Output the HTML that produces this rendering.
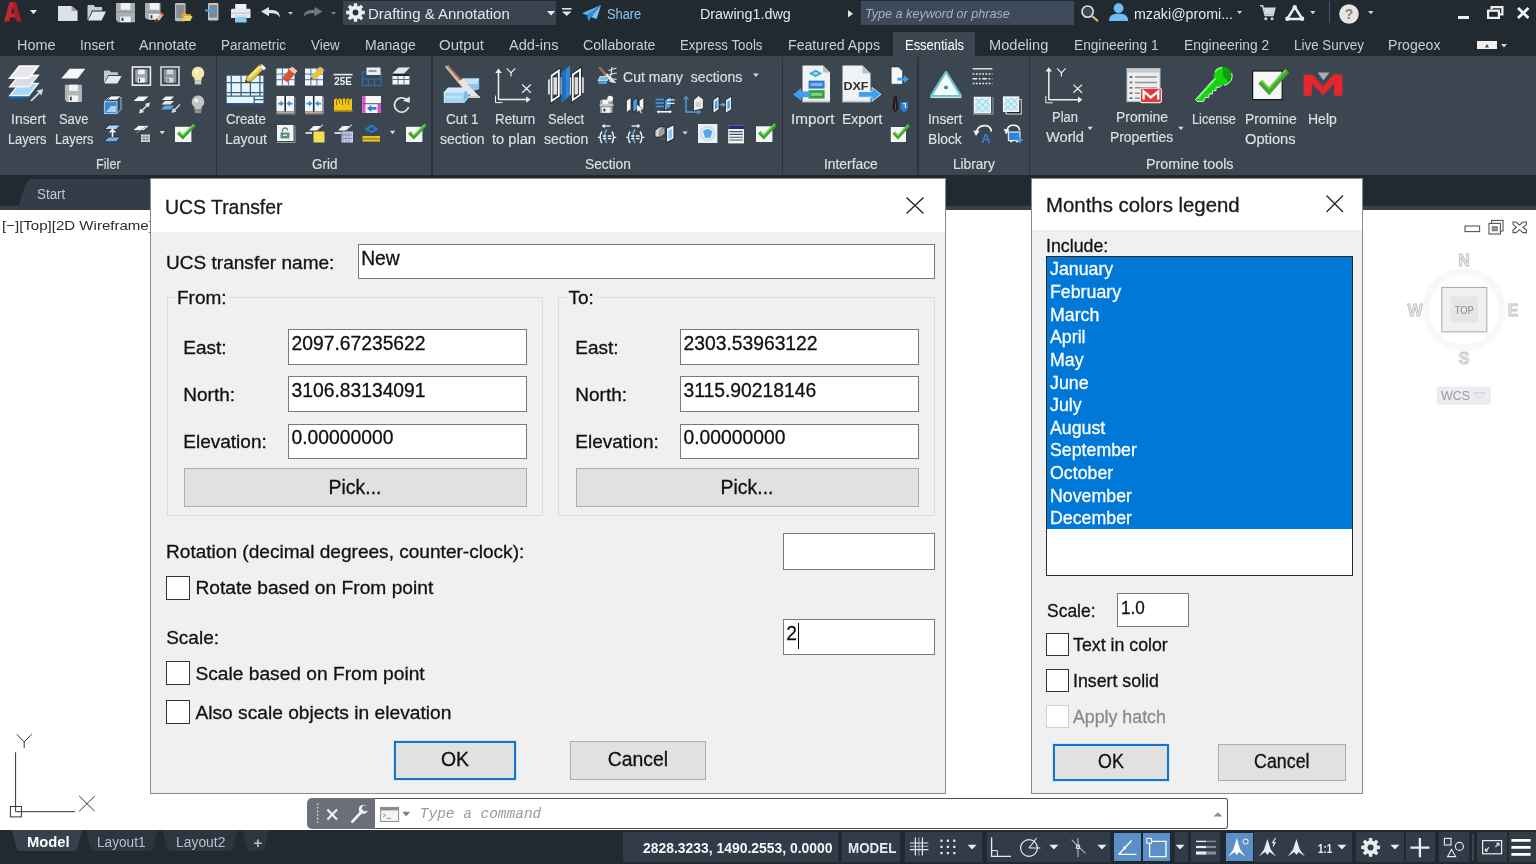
<!DOCTYPE html>
<html><head><meta charset="utf-8"><title>AutoCAD</title>
<style>
html,body{margin:0;padding:0;}
body{width:1536px;height:864px;position:relative;overflow:hidden;background:#fff;font-family:"Liberation Sans",sans-serif;}
.t{position:absolute;white-space:pre;line-height:1;}
.r{position:absolute;box-sizing:border-box;}
svg{overflow:visible;}
#w{position:absolute;left:0;top:0;width:1536px;height:864px;overflow:hidden;background:#fff;filter:blur(0.4px);}
</style></head><body><div id="w">
<div class="r" style="left:0.00px;top:0.00px;width:1536.00px;height:56.00px;background:#212a31;"></div>
<div class="r" style="left:0.00px;top:56.00px;width:1536.00px;height:118.50px;background:#3c4651;"></div>
<div class="r" style="left:0.00px;top:174.70px;width:1536.00px;height:35.30px;background:#212a31;"></div>
<div class="r" style="left:0.00px;top:206.00px;width:1536.00px;height:4.00px;background:#38424b;"></div>
<div class="r" style="left:0.00px;top:829.50px;width:1536.00px;height:34.50px;background:#212a31;"></div>
<div class="r" style="left:342.50px;top:1.00px;width:213.50px;height:24.00px;background:#3a4451;"></div>
<div class="t" style="left:368.00px;top:6.90px;font-size:14px;color:#e4e7ea;transform:scaleX(1.0713);transform-origin:0 0;">Drafting &amp; Annotation</div>
<div class="t" style="left:606.50px;top:6.90px;font-size:14px;color:#8cc4f0;transform:scaleX(0.9168);transform-origin:0 0;">Share</div>
<div class="t" style="left:700.25px;top:6.90px;font-size:14px;color:#e4e7ea;transform:scaleX(1.0230);transform-origin:0 0;">Drawing1.dwg</div>
<div class="r" style="left:861.00px;top:1.00px;width:212.50px;height:24.00px;background:#3e4a5c;"></div>
<div class="t" style="left:864.50px;top:7.32px;font-size:13.5px;color:#a3b2c4;transform:scaleX(0.9334);transform-origin:0 0;font-style:italic;">Type a keyword or phrase</div>
<div class="t" style="left:1134.25px;top:6.90px;font-size:14px;color:#e4e7ea;transform:scaleX(1.0159);transform-origin:0 0;">mzaki@promi...</div>
<div class="r" style="left:893.00px;top:32.00px;width:82.00px;height:24.00px;background:#3c4651;"></div>
<div class="t" style="left:16.50px;top:37.85px;font-size:14px;color:#c9ced4;transform:scaleX(1.0309);transform-origin:0 0;">Home</div>
<div class="t" style="left:79.50px;top:37.85px;font-size:14px;color:#c9ced4;transform:scaleX(0.9782);transform-origin:0 0;">Insert</div>
<div class="t" style="left:138.75px;top:37.85px;font-size:14px;color:#c9ced4;transform:scaleX(1.0259);transform-origin:0 0;">Annotate</div>
<div class="t" style="left:221.25px;top:37.85px;font-size:14px;color:#c9ced4;transform:scaleX(0.9604);transform-origin:0 0;">Parametric</div>
<div class="t" style="left:310.75px;top:37.85px;font-size:14px;color:#c9ced4;transform:scaleX(0.9554);transform-origin:0 0;">View</div>
<div class="t" style="left:364.50px;top:37.85px;font-size:14px;color:#c9ced4;transform:scaleX(1.0031);transform-origin:0 0;">Manage</div>
<div class="t" style="left:439.00px;top:37.85px;font-size:14px;color:#c9ced4;transform:scaleX(1.0707);transform-origin:0 0;">Output</div>
<div class="t" style="left:509.00px;top:37.85px;font-size:14px;color:#c9ced4;transform:scaleX(1.0428);transform-origin:0 0;">Add-ins</div>
<div class="t" style="left:582.75px;top:37.85px;font-size:14px;color:#c9ced4;transform:scaleX(1.0126);transform-origin:0 0;">Collaborate</div>
<div class="t" style="left:680.25px;top:37.85px;font-size:14px;color:#c9ced4;transform:scaleX(0.9495);transform-origin:0 0;">Express Tools</div>
<div class="t" style="left:788.00px;top:37.85px;font-size:14px;color:#c9ced4;transform:scaleX(1.0103);transform-origin:0 0;">Featured Apps</div>
<div class="t" style="left:904.75px;top:37.85px;font-size:14px;color:#ffffff;transform:scaleX(0.9247);transform-origin:0 0;">Essentials</div>
<div class="t" style="left:988.75px;top:37.85px;font-size:14px;color:#c9ced4;transform:scaleX(1.0429);transform-origin:0 0;">Modeling</div>
<div class="t" style="left:1073.50px;top:37.85px;font-size:14px;color:#c9ced4;transform:scaleX(0.9780);transform-origin:0 0;">Engineering 1</div>
<div class="t" style="left:1183.75px;top:37.85px;font-size:14px;color:#c9ced4;transform:scaleX(0.9867);transform-origin:0 0;">Engineering 2</div>
<div class="t" style="left:1294.00px;top:37.85px;font-size:14px;color:#c9ced4;transform:scaleX(0.9570);transform-origin:0 0;">Live Survey</div>
<div class="t" style="left:1388.25px;top:37.85px;font-size:14px;color:#c9ced4;transform:scaleX(1.0068);transform-origin:0 0;">Progeox</div>
<div class="r" style="left:1477.00px;top:41.30px;width:19.50px;height:8.00px;background:#f0f0f0;"></div>
<svg class="r" style="left:1485.00px;top:43.50px;" width="4.00" height="3.50" viewBox="0 0 4 3.5"><path d="M0 3.5L2 0L4 3.5z" fill="#444"/></svg>
<svg class="r" style="left:1500.50px;top:44.00px;" width="6.00" height="3.50" viewBox="0 0 6 3.5"><path d="M0 0H6L3 3.5z" fill="#d0d4d8"/></svg>
<svg class="r" style="left:3.60px;top:2.00px;" width="17.50" height="19.50" viewBox="0 0 17.5 19.5"><path d="M0 19.5L5.6 0H11.9L17.5 19.5H12.4L11.5 15.6H6L5.1 19.5z M7 11.6H10.5L8.75 4.4z" fill="#c4252f"/><path d="M8.75 0H11.9L17.5 19.5H12.4L11.5 15.6z" fill="#8e1620" opacity=".5"/></svg>
<svg class="r" style="left:29.50px;top:9.50px;" width="7.00" height="4.20" viewBox="0 0 7 4.2"><path d="M0 0H7L3.5 4.2z" fill="#e6e8ea"/></svg>
<svg class="r" style="left:58.30px;top:5.50px;" width="19.60" height="15.00" viewBox="0 0 19.6 15"><path d="M0 0H13.5L19.6 5V15H0z" fill="#dfe1e7"/><path d="M13.5 0V5H19.6z" fill="#9ba1ab"/></svg>
<svg class="r" style="left:87.20px;top:5.00px;" width="19.00" height="15.60" viewBox="0 0 19 15.6"><path d="M0.5 15.4V1.2Q0.5 0 1.7 0H6.5L8.2 2H14.2Q15.2 2 15.2 3V5.5H5L0.5 15.4z" fill="#c9ccd2"/><path d="M5.6 6.5H19L14.6 15.6H1z" fill="#e3e5ea"/></svg>
<svg class="r" style="left:116.00px;top:3.30px;" width="19.00" height="19.20" viewBox="0 0 19 19.2"><path d="M0 0H19V19.2H2.2L0 17.0z" fill="#a9aeb0"/><rect x="4.6" y="0" width="9.8" height="6.8" fill="#eef0f2"/><rect x="4.2" y="13.6" width="10.6" height="5.6" fill="#eef0f2"/><rect x="5.6" y="14.799999999999999" width="1.8" height="3.2" fill="#30363e"/><rect x="0" y="8.4" width="19" height="1" fill="#8b9093"/></svg>
<svg class="r" style="left:144.80px;top:3.30px;" width="15.50" height="16.60" viewBox="0 0 15.5 16.6"><path d="M0 0H15.5V16.6H2.2L0 14.400000000000002z" fill="#a9aeb0"/><rect x="4.6" y="0" width="9.8" height="6.8" fill="#eef0f2"/><rect x="4.2" y="11.000000000000002" width="10.6" height="5.6" fill="#eef0f2"/><rect x="5.6" y="12.200000000000001" width="1.8" height="3.2" fill="#30363e"/><rect x="0" y="8.4" width="15.5" height="1" fill="#8b9093"/></svg>
<svg class="r" style="left:153.50px;top:11.50px;" width="10.00" height="11.00" viewBox="0 0 10 11"><path d="M1 10.5L2.4 6.4L7.4 0.6L9.8 2.8L4.8 8.8z" fill="#f0b98a"/><path d="M1 10.5L2.4 6.4L4.8 8.8z" fill="#333"/><path d="M6.4 1.7L7.4 0.6L9.8 2.8L8.8 3.9z" fill="#d9534f"/></svg>
<svg class="r" style="left:174.70px;top:3.30px;" width="10.50" height="18.20" viewBox="0 0 10.5 18.2"><rect x="0" y="0" width="10.5" height="18.2" rx="1.3" fill="#b9bec2"/><rect x="1.2" y="2" width="8.1" height="13" fill="#868c90"/></svg>
<svg class="r" style="left:181.60px;top:13.00px;" width="10.50" height="8.00" viewBox="0 0 10.5 8"><path d="M0 8V0.8Q0 0 0.8 0H3.8L4.8 1.2H9V3H2.6z" fill="#d9a83a"/><path d="M2.4 3H10.5L8.4 8H0z" fill="#f3cf6a"/></svg>
<svg class="r" style="left:208.40px;top:3.30px;" width="10.40" height="17.50" viewBox="0 0 10.4 17.5"><rect x="0" y="0" width="10.4" height="17.5" rx="1.3" fill="#c5cacf"/><rect x="1.2" y="2" width="8" height="12.6" fill="#7d848b"/></svg>
<svg class="r" style="left:204.50px;top:6.50px;" width="10.50" height="7.00" viewBox="0 0 10.5 7"><path d="M0 2.4H5.6V0L10.5 3.5L5.6 7V4.6H0z" fill="#3fa2e8"/></svg>
<svg class="r" style="left:230.90px;top:3.60px;" width="19.50" height="18.50" viewBox="0 0 19.5 18.5"><rect x="4.2" y="0" width="11.2" height="5.2" fill="#eef0f2"/><path d="M0 6.2Q0 4.8 1.4 4.8H18.1Q19.5 4.8 19.5 6.2V14H0z" fill="#e8eaed"/><rect x="0" y="8.6" width="19.5" height="1" fill="#b8bdc3"/><rect x="4" y="11.6" width="11.6" height="6.9" fill="#8ccaf2"/><rect x="4" y="11.6" width="11.6" height="1.2" fill="#dfe9f2"/></svg>
<svg class="r" style="left:260.50px;top:7.20px;" width="19.00" height="10.60" viewBox="0 0 19 10.6"><path d="M0 4.6L8 0V2.9H10.8Q19 2.9 19 10.6Q16.6 6.3 10.8 6.3H8V9.2z" fill="#e2e4e7"/></svg>
<svg class="r" style="left:288.00px;top:11.60px;" width="5.00" height="2.80" viewBox="0 0 5 2.8"><path d="M0 0H5L2.5 2.8z" fill="#c9ccd1"/></svg>
<svg class="r" style="left:302.80px;top:7.20px;" width="19.50" height="10.60" viewBox="0 0 19.5 10.6"><path d="M19.5 4.6L11.5 0V2.9H8.7Q0.5 2.9 0.5 10.6Q2.9 6.3 8.7 6.3H11.5V9.2z" fill="#707882"/></svg>
<svg class="r" style="left:331.00px;top:11.60px;" width="5.00" height="2.80" viewBox="0 0 5 2.8"><path d="M0 0H5L2.5 2.8z" fill="#7f8791"/></svg>
<svg class="r" style="left:345.70px;top:2.60px;" width="19.00" height="19.00" viewBox="0 0 19 19"><path d="M16.06 7.73L18.85 7.84L18.85 11.16L16.06 11.27L15.40 12.89L17.29 14.94L14.94 17.29L12.89 15.40L11.27 16.06L11.16 18.85L7.84 18.85L7.73 16.06L6.11 15.40L4.06 17.29L1.71 14.94L3.60 12.89L2.94 11.27L0.15 11.16L0.15 7.84L2.94 7.73L3.60 6.11L1.71 4.06L4.06 1.71L6.11 3.60L7.73 2.94L7.84 0.15L11.16 0.15L11.27 2.94L12.89 3.60L14.94 1.71L17.29 4.06L15.40 6.11z" fill="#eceef0"/><circle cx="9.5" cy="9.5" r="2.9" fill="#2a323c"/><circle cx="9.5" cy="9.5" r="1.4" fill="#eceef0" opacity="0"/></svg>
<svg class="r" style="left:546.60px;top:10.60px;" width="8.20" height="4.40" viewBox="0 0 8.2 4.4"><path d="M0 0H8.2L4.1 4.4z" fill="#e6e8ea"/></svg>
<svg class="r" style="left:562.00px;top:7.50px;" width="9.50" height="8.00" viewBox="0 0 9.5 8"><rect x="0" y="0" width="9.5" height="1.6" fill="#e2e4e7"/><path d="M0 3.6H9.5L4.75 8z" fill="#e2e4e7"/></svg>
<svg class="r" style="left:581.50px;top:4.50px;" width="19.00" height="16.50" viewBox="0 0 19 16.5"><path d="M19 0L0 8.2L5.2 10.2z" fill="#5db4f0"/><path d="M19 0L5.2 10.2L6.4 16.5L9.3 12z" fill="#2f8fd8"/><path d="M19 0L9.3 12L14.6 14z" fill="#7cc4f4"/></svg>
<svg class="r" style="left:848.00px;top:9.50px;" width="5.00" height="7.60" viewBox="0 0 5 7.6"><path d="M0 0L5 3.8L0 7.6z" fill="#e2e4e7"/></svg>
<svg class="r" style="left:1081.00px;top:5.00px;" width="17.50" height="16.50" viewBox="0 0 17.5 16.5"><circle cx="6.6" cy="6.6" r="5.6" fill="#3c4653" stroke="#dfe2e6" stroke-width="1.6"/><path d="M10.8 10.8L16.4 15.6" stroke="#c9b678" stroke-width="2.2" stroke-linecap="round"/></svg>
<svg class="r" style="left:1109.30px;top:3.00px;" width="19.20" height="18.00" viewBox="0 0 19.2 18"><circle cx="9.6" cy="5.2" r="4.9" fill="#6dbdf3"/><path d="M0 18Q0 10.6 9.6 10.6Q19.2 10.6 19.2 18z" fill="#6dbdf3"/></svg>
<svg class="r" style="left:1237.00px;top:11.00px;" width="5.20" height="3.00" viewBox="0 0 5.2 3"><path d="M0 0H5.2L2.6 3z" fill="#d0d3d8"/></svg>
<svg class="r" style="left:1259.50px;top:5.00px;" width="15.00" height="16.00" viewBox="0 0 15 16"><path d="M0 0.8H2.6L5.2 10.6H13L14.8 3.2H3.6" fill="none" stroke="#d5d8dc" stroke-width="1.5"/><path d="M4 4H14.2L12.6 9.8H5.4z" fill="#d5d8dc"/><circle cx="5.8" cy="13.8" r="1.5" fill="#d5d8dc"/><circle cx="12" cy="13.8" r="1.5" fill="#d5d8dc"/></svg>
<svg class="r" style="left:1284.50px;top:5.00px;" width="19.50" height="16.00" viewBox="0 0 19.5 16"><path d="M9.75 2L2.2 14H17.3z" fill="none" stroke="#eceef0" stroke-width="2.4" stroke-linejoin="round"/><circle cx="9.75" cy="2.2" r="2.2" fill="#eceef0"/><circle cx="2.4" cy="13.8" r="2.2" fill="#eceef0"/><circle cx="17.1" cy="13.8" r="2.2" fill="#eceef0"/></svg>
<svg class="r" style="left:1310.00px;top:10.80px;" width="5.60" height="3.20" viewBox="0 0 5.6 3.2"><path d="M0 0H5.6L2.8 3.2z" fill="#d0d3d8"/></svg>
<div class="r" style="left:1328.60px;top:1.00px;width:1.00px;height:21.50px;background:#4a5460;"></div>
<svg class="r" style="left:1339.00px;top:4.20px;" width="20.00" height="20.00" viewBox="0 0 20 20"><circle cx="10" cy="10" r="9.8" fill="#e6e5e1"/><text x="10" y="15" font-family="Liberation Sans" font-size="14" font-weight="700" text-anchor="middle" fill="#8a7f68">?</text></svg>
<svg class="r" style="left:1367.60px;top:10.80px;" width="5.60" height="3.20" viewBox="0 0 5.6 3.2"><path d="M0 0H5.6L2.8 3.2z" fill="#d0d3d8"/></svg>
<div class="r" style="left:1458.30px;top:16.00px;width:10.70px;height:3.00px;background:#eceef0;"></div>
<svg class="r" style="left:1486.50px;top:6.00px;" width="16.50" height="13.00" viewBox="0 0 16.5 13"><path d="M4.6 3.6V1.1H15.4V8.4H12.4" fill="none" stroke="#eceef0" stroke-width="2.2"/><rect x="1.1" y="4.7" width="10.8" height="7.2" fill="none" stroke="#eceef0" stroke-width="2.2"/></svg>
<svg class="r" style="left:1516.50px;top:7.00px;" width="12.50" height="12.00" viewBox="0 0 12.5 12"><path d="M1 1L11.5 11M11.5 1L1 11" stroke="#f4f5f6" stroke-width="2.8" fill="none"/></svg>
<div class="r" style="left:215.80px;top:57.00px;width:1.40px;height:117.50px;background:#29313a;"></div>
<div class="r" style="left:431.30px;top:57.00px;width:1.40px;height:117.50px;background:#29313a;"></div>
<div class="r" style="left:781.80px;top:57.00px;width:1.40px;height:117.50px;background:#29313a;"></div>
<div class="r" style="left:917.30px;top:57.00px;width:1.40px;height:117.50px;background:#29313a;"></div>
<div class="r" style="left:1028.80px;top:57.00px;width:1.40px;height:117.50px;background:#29313a;"></div>
<div class="t" style="left:96.40px;top:157.15px;font-size:14px;color:#dcdfe3;transform:scaleX(0.9074);transform-origin:0 0;-webkit-text-stroke:0.2px;">Filer</div>
<div class="t" style="left:312.00px;top:157.15px;font-size:14px;color:#dcdfe3;transform:scaleX(0.9604);transform-origin:0 0;-webkit-text-stroke:0.2px;">Grid</div>
<div class="t" style="left:585.30px;top:157.15px;font-size:14px;color:#dcdfe3;transform:scaleX(0.9829);transform-origin:0 0;-webkit-text-stroke:0.2px;">Section</div>
<div class="t" style="left:824.20px;top:157.15px;font-size:14px;color:#dcdfe3;transform:scaleX(0.9876);transform-origin:0 0;-webkit-text-stroke:0.2px;">Interface</div>
<div class="t" style="left:953.30px;top:157.15px;font-size:14px;color:#dcdfe3;transform:scaleX(0.9744);transform-origin:0 0;-webkit-text-stroke:0.2px;">Library</div>
<div class="t" style="left:1145.50px;top:157.15px;font-size:14px;color:#dcdfe3;transform:scaleX(1.0223);transform-origin:0 0;-webkit-text-stroke:0.2px;">Promine tools</div>
<div class="t" style="left:10.60px;top:112.15px;font-size:14px;color:#dcdfe3;transform:scaleX(0.9968);transform-origin:0 0;-webkit-text-stroke:0.2px;">Insert</div>
<div class="t" style="left:8.20px;top:131.75px;font-size:14px;color:#dcdfe3;transform:scaleX(0.9138);transform-origin:0 0;-webkit-text-stroke:0.2px;">Layers</div>
<div class="t" style="left:59.30px;top:112.15px;font-size:14px;color:#dcdfe3;transform:scaleX(0.9213);transform-origin:0 0;-webkit-text-stroke:0.2px;">Save</div>
<div class="t" style="left:54.80px;top:131.75px;font-size:14px;color:#dcdfe3;transform:scaleX(0.9138);transform-origin:0 0;-webkit-text-stroke:0.2px;">Layers</div>
<div class="t" style="left:225.60px;top:112.15px;font-size:14px;color:#dcdfe3;transform:scaleX(0.9472);transform-origin:0 0;-webkit-text-stroke:0.2px;">Create</div>
<div class="t" style="left:224.50px;top:131.75px;font-size:14px;color:#dcdfe3;transform:scaleX(0.9992);transform-origin:0 0;-webkit-text-stroke:0.2px;">Layout</div>
<div class="t" style="left:445.50px;top:112.15px;font-size:14px;color:#dcdfe3;transform:scaleX(0.9713);transform-origin:0 0;-webkit-text-stroke:0.2px;">Cut 1</div>
<div class="t" style="left:439.90px;top:131.75px;font-size:14px;color:#dcdfe3;transform:scaleX(1.0032);transform-origin:0 0;-webkit-text-stroke:0.2px;">section</div>
<div class="t" style="left:494.70px;top:112.15px;font-size:14px;color:#dcdfe3;transform:scaleX(0.9543);transform-origin:0 0;-webkit-text-stroke:0.2px;">Return</div>
<div class="t" style="left:492.00px;top:131.75px;font-size:14px;color:#dcdfe3;transform:scaleX(1.0468);transform-origin:0 0;-webkit-text-stroke:0.2px;">to plan</div>
<div class="t" style="left:547.90px;top:112.15px;font-size:14px;color:#dcdfe3;transform:scaleX(0.9252);transform-origin:0 0;-webkit-text-stroke:0.2px;">Select</div>
<div class="t" style="left:544.00px;top:131.75px;font-size:14px;color:#dcdfe3;transform:scaleX(1.0009);transform-origin:0 0;-webkit-text-stroke:0.2px;">section</div>
<div class="t" style="left:622.50px;top:69.55px;font-size:14px;color:#dcdfe3;transform:scaleX(1.0021);transform-origin:0 0;-webkit-text-stroke:0.2px;">Cut many  sections</div>
<div class="t" style="left:790.80px;top:112.15px;font-size:14px;color:#dcdfe3;transform:scaleX(1.0939);transform-origin:0 0;-webkit-text-stroke:0.2px;">Import</div>
<div class="t" style="left:841.70px;top:112.15px;font-size:14px;color:#dcdfe3;transform:scaleX(0.9960);transform-origin:0 0;-webkit-text-stroke:0.2px;">Export</div>
<div class="t" style="left:928.30px;top:112.15px;font-size:14px;color:#dcdfe3;transform:scaleX(0.9768);transform-origin:0 0;-webkit-text-stroke:0.2px;">Insert</div>
<div class="t" style="left:928.30px;top:131.75px;font-size:14px;color:#dcdfe3;transform:scaleX(0.9844);transform-origin:0 0;-webkit-text-stroke:0.2px;">Block</div>
<div class="t" style="left:1052.00px;top:110.15px;font-size:14px;color:#dcdfe3;transform:scaleX(0.9279);transform-origin:0 0;-webkit-text-stroke:0.2px;">Plan</div>
<div class="t" style="left:1045.50px;top:130.05px;font-size:14px;color:#dcdfe3;transform:scaleX(1.0467);transform-origin:0 0;-webkit-text-stroke:0.2px;">World</div>
<div class="t" style="left:1115.60px;top:110.15px;font-size:14px;color:#dcdfe3;transform:scaleX(0.9994);transform-origin:0 0;-webkit-text-stroke:0.2px;">Promine</div>
<div class="t" style="left:1110.00px;top:130.05px;font-size:14px;color:#dcdfe3;transform:scaleX(0.9905);transform-origin:0 0;-webkit-text-stroke:0.2px;">Properties</div>
<div class="t" style="left:1192.40px;top:111.65px;font-size:14px;color:#dcdfe3;transform:scaleX(0.9097);transform-origin:0 0;-webkit-text-stroke:0.2px;">License</div>
<div class="t" style="left:1244.70px;top:111.65px;font-size:14px;color:#dcdfe3;transform:scaleX(0.9936);transform-origin:0 0;-webkit-text-stroke:0.2px;">Promine</div>
<div class="t" style="left:1245.00px;top:131.55px;font-size:14px;color:#dcdfe3;transform:scaleX(1.0487);transform-origin:0 0;-webkit-text-stroke:0.2px;">Options</div>
<div class="t" style="left:1308.20px;top:111.65px;font-size:14px;color:#dcdfe3;transform:scaleX(1.0002);transform-origin:0 0;-webkit-text-stroke:0.2px;">Help</div>
<svg class="r" style="left:0;top:0" width="1536" height="864" viewBox="0 0 1536 864"><path d="M19.6 83.4L38.3 84L28.9 96.4L9.6 97.4z" fill="#1f5f9a" transform="translate(-1.2,1.8)"/><path d="M19.6 83.4H38.1L28.7 95.6H9.9z" fill="#a4d8f6" stroke="#eaf6fd" stroke-width="1.5"/><path d="M19.3 75.4H38.1L29 86.8H9.9z" fill="#d9dde0" stroke="#f4f5f6" stroke-width="1.6"/><path d="M19.3 66.2H38.1L29 78H9.9z" fill="#e6e8ea" stroke="#fafafa" stroke-width="1.8"/><path d="M31.0 100.8L42.0 90.2M40.8 94.8L42.0 90.2L37.3 91.3" fill="none" stroke="#d8dbde" stroke-width="1.7"/><path d="M69.6 68.8H85.3L77.8 78.4H61.2z" fill="#f6f7f8"/><path d="M64.9 84.7H81.9V101.9H66.9L64.9 99.8z" fill="#b2b7ba"/><rect x="69.0" y="84.7" width="8.8" height="6.2" fill="#f0f2f3"/><rect x="68.6" y="95.4" width="9.5" height="6.5" fill="#f0f2f3"/><rect x="70.0" y="96.7" width="1.7" height="3.8" fill="#333a42"/><path d="M104 83V71.5Q104 70.5 105 70.5H109.5L111 72.2H117Q118 72.2 118 73.2V75H108.5z" fill="#c4c8cd"/><path d="M108.8 76H121.6L117.4 83.6H104.4z" fill="#e6e8ec"/><g opacity="1"><rect x="132.4" y="67" width="18" height="18.2" fill="none" stroke="#eceef0" stroke-width="1.6"/><path d="M135.2 69.6H147.6V82.6H136.7L135.2 81.0z" fill="#9da3a8"/><rect x="138.2" y="69.6" width="6.4" height="4.7" fill="#f2f3f4"/><rect x="137.9" y="77.7" width="6.9" height="4.9" fill="#f2f3f4"/><rect x="138.9" y="78.7" width="1.2" height="2.9" fill="#333a42"/></g><g opacity="0.85"><rect x="161.0" y="67" width="18" height="18.2" fill="none" stroke="#eceef0" stroke-width="1.6"/><path d="M163.79999999999998 69.6H176.2V82.6H165.3L163.79999999999998 81.0z" fill="#9da3a8"/><rect x="166.8" y="69.6" width="6.4" height="4.7" fill="#f2f3f4"/><rect x="166.5" y="77.7" width="6.9" height="4.9" fill="#f2f3f4"/><rect x="167.5" y="78.7" width="1.2" height="2.9" fill="#333a42"/></g><path d="M198 66.8a6.3 6.3 0 0 1 3.6 11.4v2.6h-7.2v-2.6a6.3 6.3 0 0 1 3.6-11.4z" fill="#f3e7a2"/><rect x="194.8" y="80.8" width="6.4" height="3.6" fill="#c9ccc8"/><circle cx="196.6" cy="71.6" r="2" fill="#fffbe6"/><path d="M198 95.6a6.3 6.3 0 0 1 3.6 11.4v2.6h-7.2v-2.6a6.3 6.3 0 0 1 3.6-11.4z" fill="#c2c4c5"/><rect x="194.8" y="109.6" width="6.4" height="3.6" fill="#8d9194"/><circle cx="196.4" cy="100.4" r="2" fill="#f0f0f0"/><rect x="104.5" y="101.5" width="12.5" height="12" fill="#3e88cc" stroke="#8cc4ee" stroke-width="1.2"/><path d="M104.5 101.5L108.5 97.5H121V109.5L117 113.5" fill="none" stroke="#8cc4ee" stroke-width="1"/><path d="M111.0 96.0H121.0L117.0 100.0H107.0z" fill="#f4f5f7" stroke="#222" stroke-width="0.6"/><path d="M106 112L111 106H116V112z" fill="#a6d4f4"/><path d="M138.5 96.5H148.5L143.5 101.0H133.5z" fill="#f4f5f7"/><path d="M140.0 112.5L149.0 103.5M148.1 107.0L149.0 103.5L145.5 104.4M140.9 109.0L140.0 112.5L143.5 111.6" fill="none" stroke="#e4e6e9" stroke-width="1.5"/><path d="M165.5 96.5H174.0L170.5 100.1H162.0z" fill="#f4f5f7"/><path d="M165.0 101.0H174.0L170.5 104.6H161.5z" fill="#e4e7ea"/><path d="M164.5 105.5H174.0L170.5 109.5H161.0z" fill="#5aa6e2"/><path d="M180.0 104.5L172.5 112.0M173.4 108.5L172.5 112.0L176.0 111.1" fill="none" stroke="#d5d8dc" stroke-width="1.5"/><path d="M109.0 125.0H120.5L116.0 129.5H104.5z" fill="#a6d4f4" stroke="#1a1e24" stroke-width="0.7"/><path d="M108.5 137.0H120.5L116.0 141.8H104.0z" fill="#6db4ea" stroke="#1a1e24" stroke-width="0.7"/><path d="M112.5 137V130M109.8 132.6L112.5 129.4L115.2 132.6" stroke="#f2f4f6" stroke-width="1.6" fill="none"/><path d="M138.5 125.5H149.5L143.5 130.5H132.5z" fill="#f4f5f7" stroke="#2a2f36" stroke-width="0.6"/><rect x="141" y="134.5" width="9" height="7.5" fill="#d9dce0"/><path d="M141 137H150M141 139.5H150M144 134.5V142M147 134.5V142" stroke="#5a626c" stroke-width="0.6"/><path d="M136 133.5L146 126.5" stroke="#8e949b" stroke-width="0.8"/><path d="M159.4 131H165.0L162.20000000000002 134.3z" fill="#d6d9dd"/><rect x="175.0" y="126.8" width="16.4" height="15.2" fill="#f2f5f2"/><path d="M178.3 132.5L182.8 137.1L194.5 124.9" fill="none" stroke="#35a22c" stroke-width="3.5" stroke-linejoin="miter"/><path d="M179.1 131.9L182.8 135.5L193.9 124.3" fill="none" stroke="#7ad95a" stroke-width="1.2"/><rect x="226.7" y="75.7" width="36.7" height="27.6" fill="#e6f5fe"/><rect x="226.4" y="103" width="37.4" height="1.4" fill="#2a5f98"/><path d="M231.3 75.7V95.6M241.1 75.7V95.6M250.4 75.7V95.6M259.9 75.7V95.6M226.7 82.6H263.4M226.7 92.7H263.4M226.7 96H263.4M254.2 96V103.2M254.2 99.5H263.4" stroke="#35607f" stroke-width="1.25"/><path d="M245.2 82.6L247 76.8L258.6 65.2L263.2 69.6L251.4 81z" fill="#e8c93e" stroke="#5a4a10" stroke-width="0.7"/><path d="M248.2 76.4L259.4 65.6L261 67.2L249.6 78.4z" fill="#f8ea8e"/><path d="M245.2 82.6L246 80L247.8 81.8z" fill="#222"/><path d="M259.6 66.2L261.8 64L266 68L263.8 70.4z" fill="#f4f1ec"/><path d="M258.4 65L260.4 63.2L262 64.6L260 66.6z" fill="#a86a4a"/><rect x="276.5" y="68.5" width="18" height="17" fill="#f2f6fa"/><path d="M276.5 74.1H294.5M276.5 79.7H294.5M282.4 68.5V85.5M288.4 68.5V85.5" stroke="#3a78b8" stroke-width="1"/><path d="M282 78L289.5 69.5L295 74L287.5 82.5z" fill="#d9532e"/><path d="M289.5 69.5L292 66.6L297.4 71L295 74z" fill="#f0c9a8"/><rect x="305" y="68.5" width="18" height="17" fill="#f2f6fa"/><path d="M305 74.1H323M305 79.7H323M310.9 68.5V85.5M316.9 68.5V85.5" stroke="#3a78b8" stroke-width="1"/><path d="M310.5 79.5L312.5 75L320 66.5L324.4 70.2L317 78.6z" fill="#f0c040"/><path d="M310.5 79.5L311.4 77.4L313 78.7z" fill="#222"/><rect x="333.5" y="73.8" width="19" height="1.6" fill="#e8eaed"/><text x="343" y="84.8" font-family="Liberation Sans" font-weight="700" font-size="10.5" text-anchor="middle" fill="#eef0f2" textLength="17.5" lengthAdjust="spacingAndGlyphs">25E</text><rect x="362.5" y="72" width="18.5" height="13.5" fill="none" stroke="#2f6fae" stroke-width="1.2"/><path d="M362.5 79H381M368.5 79V85.5M374.5 79V85.5" stroke="#2f6fae" stroke-width="1.2"/><rect x="366.5" y="67.5" width="14" height="7.5" fill="#e9edf0"/><rect x="368.5" y="70" width="8" height="2" fill="#8fa0b2"/><path d="M398.5 67.5H410.0L404.0 73.5H392.5z" fill="#dfe8ef" stroke="#8aa" stroke-width="0.5"/><rect x="392.5" y="75.5" width="17" height="9" fill="#f4f5f6"/><path d="M392.5 79.5H409.5M398 75.5V84.5M404 75.5V84.5" stroke="#444b54" stroke-width="0.8"/><rect x="392.5" y="74" width="17" height="2" fill="#20262c"/><rect x="276.5" y="96" width="17.5" height="15.5" fill="#f4f6f8"/><path d="M285.2 96V111.5" stroke="#20262c" stroke-width="1.6"/><path d="M278.0 103.6H282.5M288.0 103.6H292.5" stroke="#3c8fd8" stroke-width="1.6"/><path d="M280.5 100.6L283.9 103.6L280.5 106.6zM290.0 100.6L286.5 103.6L290.0 106.6z" fill="#3c8fd8"/><rect x="276.5" y="112" width="17.5" height="1.4" fill="#c8a890"/><path d="M276.5 114H295.0V97" stroke="#aab0b6" stroke-width="0.7" fill="none"/><rect x="305" y="96" width="17.5" height="15.5" fill="#f4f6f8"/><path d="M313.7 96V111.5" stroke="#20262c" stroke-width="1.6"/><path d="M306.5 103.6H311M316.5 103.6H321" stroke="#3c8fd8" stroke-width="1.6"/><path d="M309 100.6L312.4 103.6L309 106.6zM318.5 100.6L315 103.6L318.5 106.6z" fill="#3c8fd8"/><rect x="305" y="112" width="17.5" height="1.4" fill="#c8a890"/><path d="M305 114H323.5V97" stroke="#aab0b6" stroke-width="0.7" fill="none"/><path d="M334 100L336 98L338 100L340 98L342 100L344 98L346 100L348 98L350 100L352 98V110.5H334z" fill="#f0c21a"/><path d="M336.5 100V105M339.5 100V103.5M342.5 100V105M345.5 100V103.5M348.5 100V105" stroke="#7a5c00" stroke-width="0.9"/><rect x="334" y="110" width="18.5" height="1.8" fill="#b8900c"/><rect x="362.5" y="96" width="18.5" height="17" fill="#f6f6f8"/><rect x="362.5" y="96" width="3" height="17" fill="#e64ad6"/><rect x="377.5" y="104" width="3.5" height="9" fill="#e64ad6"/><rect x="362.5" y="103.2" width="18.5" height="1" fill="#555"/><path d="M367 108.4L371.4 104.8V107H376.5V109.8H371.4V112z" fill="#2f7fd0"/><path d="M406.5 99.6A7.2 7.2 0 1 0 408.6 107" fill="none" stroke="#e4e6e9" stroke-width="1.7"/><path d="M402.8 100.8L409.8 96.4V102.8z" fill="#e4e6e9"/><rect x="277" y="125" width="16.5" height="16" fill="#f4f6f5"/><path d="M276.5 142.5H295V125.6" stroke="#aab0b6" stroke-width="0.8" fill="none"/><rect x="280.5" y="132.5" width="9" height="6" fill="#5f8f78"/><path d="M282.4 132.5V130.6a2.6 2.6 0 0 1 5.2 0" fill="none" stroke="#5f8f78" stroke-width="1.3"/><rect x="283" y="134.6" width="4" height="1.4" fill="#dfe9e2"/><path d="M313.5 126.0H321.0L316.5 130.5H309.0z" fill="#f4f5f7"/><rect x="313.5" y="131.5" width="11" height="11" fill="#f2e052"/><path d="M305.5 133H312" stroke="#f4f5f7" stroke-width="1.6"/><path d="M317 130L323 124.6" stroke="#cfd3d8" stroke-width="1.1"/><path d="M342.5 126.0H350.0L345.5 130.5H338.0z" fill="#f4f5f7"/><rect x="341.5" y="131.5" width="11.5" height="11" fill="#c6cbe6"/><path d="M343 133V142M346 133V142M349 133V142M342 135H353M342 138.5H353" stroke="#5a66b0" stroke-width="0.9" stroke-dasharray="1.2 1"/><path d="M334.5 133H341" stroke="#f4f5f7" stroke-width="1.6"/><path d="M346 130L352 124.6" stroke="#cfd3d8" stroke-width="1.1"/><path d="M364.5 129L371.5 124.6L378.5 129L371.5 133.4z" fill="#2b79c2"/><path d="M368.5 129L371.5 127L374.5 129L371.5 131z" fill="#3b4553"/><rect x="362.5" y="136" width="17.5" height="5.6" fill="#eec21e"/><rect x="362.5" y="138.4" width="17.5" height="1" fill="#7a6418"/><path d="M389.8 130.8H395.40000000000003L392.6 134.20000000000002z" fill="#d6d9dd"/><rect x="406.0" y="126.8" width="16.4" height="15.2" fill="#f2f5f2"/><path d="M409.3 132.5L413.8 137.1L425.5 124.9" fill="none" stroke="#35a22c" stroke-width="3.5" stroke-linejoin="miter"/><path d="M410.1 131.9L413.8 135.5L424.9 124.3" fill="none" stroke="#7ad95a" stroke-width="1.2"/></svg>
<svg class="r" style="left:0;top:0" width="1536" height="864" viewBox="0 0 1536 864"><path d="M462 78.5H479.2V89L472 91.5H462z" fill="#8cc6f0"/><path d="M462 78.5H479.2L477 84H462z" fill="#c6e4f8"/><path d="M443.8 92.2L448 87.4H468.6V97.4L464.4 102.8H443.8z" fill="#e9f5fd"/><path d="M444.6 92.6L448.4 88.2H467.8L464 92.6z" fill="#cfe9fa"/><rect x="444.6" y="92.6" width="19.4" height="9.4" fill="#a3d3f5"/><path d="M464 92.6L467.8 88.2V97.2L464 102z" fill="#7bbcea"/><rect x="446" y="96" width="16.6" height="2.6" fill="#bfe1f8"/><path d="M445 66.8L448.2 64.8L466 84.6L461.8 87.2z" fill="#a4705c"/><path d="M445 66.8L446.6 65.8L464.2 85.6L461.8 87.2z" fill="#d8b9a8"/><path d="M458.5 81.5L462.5 79L479.6 96.8L470.6 96.2z" fill="#e9e6e2"/><path d="M468 96H480V98H469z" fill="#cfd0d0"/><path d="M498.5 99.6V71.6M498.5 99.6H527.6" stroke="#eef0f2" stroke-width="1.5" fill="none"/><path d="M495.3 73.0L498.5 68.6L501.7 73.0z" fill="#eef0f2"/><path d="M526.2 96.39999999999999L530.6 99.6L526.2 102.8z" fill="#eef0f2"/><path d="M495.5 95.6V102.6H502.5" stroke="#eef0f2" stroke-width="1" fill="none"/><path d="M506.8 68.4L511.0 72.80000000000001L515.2 68.4M511.0 72.80000000000001V76.4" stroke="#eef0f2" stroke-width="1.2" fill="none"/><path d="M522.2 84.5L530.8000000000001 92.7M530.8000000000001 84.5L522.2 92.7" stroke="#eef0f2" stroke-width="1.2" fill="none"/><path d="M548 79.8H578L584 77.6V92.4L578 94.6H548z" fill="#dcdedf"/><path d="M548 79.8L554 77.6H584L578 79.8z" fill="#f2f3f4"/><path d="M578 79.8L584 77.6V92.4L578 94.6z" fill="#c3c6c8"/><rect x="565" y="79.8" width="7" height="14.8" fill="#ead9d0"/><path d="M548 87H578" stroke="#cfd2d4" stroke-width="0.6"/><path d="M551.6 75.6L558.8 70.6V96L551.6 101z" fill="none" stroke="#14181c" stroke-width="3.4"/><path d="M551.6 75.6L558.8 70.6V96L551.6 101z" fill="none" stroke="#f8f8f8" stroke-width="1.9"/><path d="M572.8 74.6L580 69.6V95L572.8 100z" fill="none" stroke="#14181c" stroke-width="3.4"/><path d="M572.8 74.6L580 69.6V95L572.8 100z" fill="none" stroke="#f8f8f8" stroke-width="1.9"/><path d="M561.6 72.6L570 65.4V95.4L561.6 102.6z" fill="#2f86d8"/><path d="M561.6 72.6L565.8 69V99L561.6 102.6z" fill="#1d6fc0"/><path d="M598 81L600 76.5H609L607 81z" fill="#7cc0f0" stroke="#e6f3fc" stroke-width="0.8"/><path d="M598.5 81.5H607V84H598.5z" fill="#4a9de0"/><path d="M598.4 68L600.4 66.8L610 77.6L607.6 79z" fill="#a4705c"/><path d="M605 75L607.4 73.4L616.6 83L611.6 82.6z" fill="#e9e6e2"/><path d="M608.5 70.5L616.5 68M609.5 74.5L616.8 73M611 78.5L616.5 79.5M612 67L610 82" stroke="#dfe9f2" stroke-width="1.1"/><path d="M753 73.6H758.8L755.9 77.1z" fill="#d6d9dd"/><rect x="600" y="100" width="12.6" height="12.8" fill="#9aa0a6"/><rect x="602.4" y="99.6" width="6" height="4.4" fill="#eef0f2"/><rect x="602" y="107.4" width="8.4" height="5.4" fill="#eef0f2"/><rect x="603.4" y="108.8" width="2" height="2.6" fill="#2b323a"/><circle cx="610.2" cy="98.6" r="2.9" fill="#f4f5f6"/><rect x="599.6" y="104.4" width="14" height="1.2" fill="#e0e2e4"/><path d="M626.4 100.5L631.0 97.5V109.5L626.4 112.5z" fill="#f2f4f6" stroke="#12161a" stroke-width="0.7"/><path d="M632.8 100.5L637.4 97.5V109.5L632.8 112.5z" fill="#4a9de0" stroke="#12161a" stroke-width="0.7"/><path d="M639.2 100.5L643.8 97.5V109.5L639.2 112.5z" fill="#f2f4f6" stroke="#12161a" stroke-width="0.7"/><path d="M636.5 104L637 112.5L639.2 110.6L641 114L642.4 113.2L640.8 110L643.4 109.6z" fill="#f4f5f6" stroke="#222" stroke-width="0.5"/><path d="M655.5 99.6H664M655.5 103H664M655.5 106.4H664" stroke="#4a9de0" stroke-width="1.5"/><path d="M664.5 100.5L671 96V107L664.5 111z" fill="#4a9de0" stroke="#12161a" stroke-width="0.6"/><path d="M667 99.8H674.5M667 103.4H674.5" stroke="#e6f0f8" stroke-width="1.3"/><path d="M657.5 111.8H671" stroke="#f2f4f6" stroke-width="1.6"/><path d="M659 110L656.6 111.8L659 113.6zM669.5 110L672 111.8L669.5 113.6z" fill="#f2f4f6"/><path d="M686 98V112H699" stroke="#5a9ede" stroke-width="1.4" fill="none"/><path d="M683.6 99.5L686 96.5L688.4 99.5M697.5 109.8L700.4 112L697.5 114.2" stroke="#5a9ede" stroke-width="1.1" fill="none"/><path d="M693.5 100L698.6 95.6L703.4 99.4V108.6L693.5 111z" fill="#ecedee" stroke="#12161a" stroke-width="0.7"/><rect x="696" y="101.6" width="5" height="5.4" fill="#d9cfc4"/><path d="M713 100L719 96V109.4L713 113.4z" fill="#dfeefa" stroke="#12161a" stroke-width="0.8"/><path d="M725.4 100L731.6 96V109.4L725.4 113.4z" fill="#dfeefa" stroke="#12161a" stroke-width="0.8"/><path d="M715 101.6L717.4 100V108L715 109.6zM727.4 101.6L729.8 100V108L727.4 109.6z" fill="#4a9de0"/><path d="M719.6 104.6H725" stroke="#4a9de0" stroke-width="1.6"/><path d="M722.6 102.4L725.4 104.6L722.6 106.8z" fill="#6ab4ee"/><path d="M601.9 131.5A7 9 0 0 0 601.9 143" fill="none" stroke="#e8f2fa" stroke-width="1.5"/><path d="M611.9 131.5A7 9 0 0 1 611.9 143" fill="none" stroke="#e8f2fa" stroke-width="1.5"/><path d="M606.9 129.5A7 9 0 0 0 606.9 143" fill="none" stroke="#6ab4ee" stroke-width="1.4"/><path d="M602.9 136H606.1999999999999M607.8 136H611.4M602.9 138.6H606.1999999999999M607.8 138.6H611.4M597.9 137.4H600.0M614.0 137.4H616.1999999999999" stroke="#f2f4f6" stroke-width="1.4"/><path d="M602.8 126H610.4" stroke="#f2f4f6" stroke-width="1.3"/><path d="M604.6 123.8L601.8 126L604.6 128.2z" fill="#f2f4f6"/><path d="M630.1 131.5A7 9 0 0 0 630.1 143" fill="none" stroke="#e8f2fa" stroke-width="1.5"/><path d="M640.1 131.5A7 9 0 0 1 640.1 143" fill="none" stroke="#e8f2fa" stroke-width="1.5"/><path d="M635.1 129.5A7 9 0 0 0 635.1 143" fill="none" stroke="#6ab4ee" stroke-width="1.4"/><path d="M631.1 136H634.4M636.0 136H639.6M631.1 138.6H634.4M636.0 138.6H639.6M626.1 137.4H628.2M642.2 137.4H644.4" stroke="#f2f4f6" stroke-width="1.4"/><path d="M631.6 126H639.2" stroke="#f2f4f6" stroke-width="1.3"/><path d="M637.4 123.8L640.2 126L637.4 128.2z" fill="#f2f4f6"/><path d="M655 130.5L659.5 127H664.5L660 130.5V137H655z" fill="#cfd2d4" stroke="#12161a" stroke-width="0.7"/><path d="M660 130.5L664.5 127V133.5L660 137z" fill="#9ea3a7"/><path d="M666.4 128.4L674 124.6V138.8L666.4 142.6z" fill="#e4f0fa" stroke="#12161a" stroke-width="0.9"/><path d="M668.4 130.6L672 128.8V137.4L668.4 139.2z" fill="#8cc4ee"/><path d="M660 139H666" stroke="#6a7078" stroke-width="0.8"/><path d="M682.4 131.4H687.8L685.1 134.6z" fill="#d6d9dd"/><rect x="698" y="124" width="19.4" height="19" fill="#eef1f4"/><circle cx="707.6" cy="133.4" r="6.8" fill="none" stroke="#cfe0f0" stroke-width="2.4"/><path d="M703 131.4Q707.6 126.6 712.4 131.4L710.6 137.8H705z" fill="#5aa8ec"/><rect x="728.2" y="125.4" width="15.8" height="18" fill="#f2f3f5"/><rect x="728.2" y="125.4" width="15.8" height="3.6" fill="#1f2c78"/><path d="M729.4 131.6H742.8M729.4 134.4H742.8M729.4 137.2H742.8M729.4 140H742.8" stroke="#4a525c" stroke-width="1.1"/><rect x="756.0" y="126.3" width="16.4" height="15.7" fill="#f2f5f2"/><path d="M759.3 132.2L763.8 136.9L775.5 124.4" fill="none" stroke="#35a22c" stroke-width="3.5" stroke-linejoin="miter"/><path d="M760.1 131.6L763.8 135.3L774.9 123.8" fill="none" stroke="#7ad95a" stroke-width="1.2"/><path d="M802.5 65.5H823.0L830.0 72.5V102.0H802.5z" fill="#f1f2f4"/><path d="M823.0 65.5V72.5H830.0z" fill="#b9bec4"/><rect x="802.5" y="100.6" width="27.5" height="1.8" fill="#c9ccd0"/><path d="M809 73.4L815.6 69.8L822.2 73.4L815.6 77z" fill="#2ea6c4"/><path d="M812 73.4L815.6 71.6L819.2 73.4L815.6 75.2z" fill="#8fdcea"/><rect x="808.6" y="80.6" width="16" height="8" fill="#2f7fd6"/><rect x="810.6" y="83" width="12" height="3" fill="#7db6ec"/><rect x="808.6" y="90.2" width="16" height="8.4" fill="#2fa03a"/><rect x="811" y="92.8" width="11" height="3" fill="#7fd47a"/><path d="M793.2 94.4L801.2 88V91.6H810V97.2H801.2V100.8z" fill="#3f9ef0"/><path d="M842.5 65.5H862.5L870.5 73.5V102.0H842.5z" fill="#f1f2f4"/><path d="M862.5 65.5V73.5H870.5z" fill="#b9bec4"/><rect x="842.5" y="100.6" width="28" height="1.8" fill="#c9ccd0"/><text x="856" y="90" font-family="Liberation Sans" font-size="11.5" font-weight="700" text-anchor="middle" fill="#2c2c2c" textLength="25" lengthAdjust="spacingAndGlyphs">DXF</text><path d="M881 94.4L872 87.4V91.6H858.6V97.2H872V101.4z" fill="#3f9ef0" stroke="#e8f2fb" stroke-width="0.8"/><path d="M891.2 67H898.6L902.6 71V84.2H891.2z" fill="#f4f5f6" stroke="#12161a" stroke-width="0.5"/><path d="M897.4 77.8H904V75.4L909 79.2L904 83V80.6H897.4z" fill="#3f9ef0"/><path d="M893.6 97.2L896.6 95.6L898.4 108.6L895.4 112.8L892.4 108.6z" fill="#1a1e24"/><path d="M895 97.6L896.2 108.4L895.4 111z" fill="#c44"/><path d="M900.4 102H908V108.6L904.2 113L900.4 108.6z" fill="#2f7fd6"/><path d="M903 103.6H905.4V108" stroke="#dfeefa" stroke-width="1.1" fill="none"/><rect x="890.8" y="127.0" width="15.2" height="15.0" fill="#f2f5f2"/><path d="M893.8 132.6L898.0 137.1L908.8 125.1" fill="none" stroke="#35a22c" stroke-width="3.2" stroke-linejoin="miter"/><path d="M894.6 132.0L898.0 135.6L908.3 124.5" fill="none" stroke="#7ad95a" stroke-width="1.1"/><path d="M946 72.6L960.4 95.6H931.6z" fill="#f4fbfc" stroke="#6cc0cc" stroke-width="3" stroke-linejoin="round"/><path d="M946 73.8L959 95H933z" fill="#f4fbfc"/><path d="M930.4 97.4H961.6" stroke="#b9dfe6" stroke-width="1.4"/><circle cx="946" cy="87.4" r="1.9" fill="#2f8f9e"/><path d="M972.6 68.8H992.4" stroke="#e8eaed" stroke-width="1.4"/><path d="M972.6 74H992.4M972.6 83.4H992.4" stroke="#e8eaed" stroke-width="1.5" stroke-dasharray="1.8 1.4"/><path d="M972.6 78.7H992.4" stroke="#e8eaed" stroke-width="1.6" stroke-dasharray="4.6 1.6 1.8 1.6"/><rect x="974.4" y="97.4" width="16" height="15.4" fill="#d6f0f8" stroke="#f6f8f9" stroke-width="1.3"/><path d="M975.4 105.1L982.4 98.4M975.4 111.80000000000001L989.4 98.4M982.4 111.80000000000001L989.4 105.1M982.4 98.4L989.4 105.1M975.4 98.4L989.4 111.80000000000001M975.4 105.1L982.4 111.80000000000001" stroke="#7cc8dc" stroke-width="0.8"/><path d="M973 114.2H993V97" stroke="#aeb4ba" stroke-width="0.8" fill="none"/><rect x="1006.2" y="99.6" width="15" height="14.4" fill="#171b20" stroke="#e8eaed" stroke-width="1"/><rect x="1003.6" y="97" width="15" height="14.4" fill="#d6f0f8" stroke="#f6f8f9" stroke-width="1.3"/><path d="M1004.6 104.2L1011.1 98M1004.6 110.4L1017.6 98M1011.1 110.4L1017.6 104.2M1011.1 98L1017.6 104.2M1004.6 98L1017.6 110.4M1004.6 104.2L1011.1 110.4" stroke="#7cc8dc" stroke-width="0.8"/><path d="M976.5 132.5Q977.5 124.8 986 125.6Q991 126.4 991.4 131.6" fill="none" stroke="#f2f4f6" stroke-width="1.7"/><path d="M973.4 130.4L979.6 131L976 136z" fill="#f2f4f6"/><text x="986" y="143" font-family="Liberation Sans" font-size="13" font-weight="700" text-anchor="middle" fill="#2f86d8">A</text><path d="M1007 130.5Q1008 124.4 1015 125.4Q1019.4 126.4 1019.6 130.6" fill="none" stroke="#f2f4f6" stroke-width="1.6"/><path d="M1003.6 129L1009.6 129.6L1006.2 134.4z" fill="#f2f4f6"/><rect x="1008.4" y="132" width="11.6" height="8.6" fill="#2f86d8" stroke="#e8f2fa" stroke-width="1.1"/><path d="M1010 141.6H1012.4M1016 141.6H1018.4" stroke="#e8f2fa" stroke-width="1.4"/><path d="M1019.6 137.2V143M1016.8 140.2H1022.6" stroke="#3f9ef0" stroke-width="1.8"/><path d="M1048.8 99.8V70.2M1048.8 99.8H1079.4" stroke="#eef0f2" stroke-width="1.5" fill="none"/><path d="M1045.6 71.60000000000001L1048.8 67.2L1052.0 71.60000000000001z" fill="#eef0f2"/><path d="M1078.0 96.6L1082.4 99.8L1078.0 103.0z" fill="#eef0f2"/><path d="M1045.8 95.8V102.8H1052.8" stroke="#eef0f2" stroke-width="1" fill="none"/><path d="M1057.2 68.4L1061.4 72.80000000000001L1065.6000000000001 68.4M1061.4 72.80000000000001V76.4" stroke="#eef0f2" stroke-width="1.2" fill="none"/><path d="M1073.4 84.6L1082.0 92.8M1082.0 84.6L1073.4 92.8" stroke="#eef0f2" stroke-width="1.2" fill="none"/><path d="M1087.4 126.8H1092.8000000000002L1090.1000000000001 130.0z" fill="#d6d9dd"/><rect x="1127" y="68.6" width="33" height="33" fill="#eceeef" stroke="#b9bdc1" stroke-width="1"/><rect x="1127" y="68.6" width="33" height="4" fill="#c8ccd0"/><path d="M1135 77H1157M1135 82.4H1157M1135 87.8H1157M1135 93.2H1146M1135 98.2H1144" stroke="#8e949a" stroke-width="1.5"/><path d="M1129.6 77H1132.4M1129.6 82.4H1132.4M1129.6 87.8H1132.4M1129.6 93.2H1132.4M1129.6 98.2H1132.4" stroke="#6a7076" stroke-width="1.8"/><rect x="1140.4" y="88.2" width="21" height="14.4" rx="1.6" fill="#e23a3a" stroke="#f6e4e4" stroke-width="1.1"/><path d="M1143.6 99.6V91.4L1150.9 97.4L1158.2 91.4V99.6" fill="none" stroke="#fff" stroke-width="2.3"/><path d="M1178.2 126.8H1183.6000000000001L1180.9 130.0z" fill="#d6d9dd"/><path d="M1195.6 99.4L1216 76.6L1223.4 83.4L1219.6 87.4L1216.2 87.2L1216 90.6L1212.6 90.6L1212.4 94L1209 94L1208.8 97.4L1205.4 97.4L1203.6 101.4H1197z" fill="#16d312" stroke="#e8fbe6" stroke-width="0.9"/><circle cx="1222.8" cy="76" r="9.2" fill="#16d312"/><path d="M1222.8 66.8A9.2 9.2 0 0 1 1229.4 82.4L1222.8 76z" fill="#0c9e0c"/><path d="M1197.6 98.4L1216 78" stroke="#7af576" stroke-width="1.6"/><path d="M1215.2 72.4A8 8 0 0 1 1222 67.6" stroke="#7af576" stroke-width="1.6" fill="none"/><path d="M1231.6 73A9.2 9.2 0 0 1 1224 85.2" stroke="#e8fbe6" stroke-width="0.9" fill="none"/><rect x="1252.6" y="71" width="29.6" height="28.6" fill="#f6f8f6" stroke="#12161a" stroke-width="1.2"/><path d="M1260.2 81.8L1269 91.4L1287.2 70.8" fill="none" stroke="#3fa82e" stroke-width="5.2"/><path d="M1261.4 80.6L1269 88.6L1286 69.6" fill="none" stroke="#6ccc48" stroke-width="1.6"/><path d="M1303.6 95.8V74.6H1312.6L1323 86.6L1333.4 74.6H1342.4V95.8H1334.2V83.6L1323 95.4L1311.8 83.6V95.8z" fill="#e6262e"/><path d="M1317.6 72.4H1329.4L1323.5 80.6z" fill="#a9acb0"/></svg>
<svg class="r" style="left:0.00px;top:179.00px;" width="320.00" height="31.00" viewBox="0 0 320 31"><path d="M0 31 L14 31 C22 31 22 0 32 0 L320 0 L320 31 Z" fill="#333d4a"/></svg>
<div class="t" style="left:37.10px;top:187.35px;font-size:14px;color:#c4c9cf;transform:scaleX(0.9572);transform-origin:0 0;">Start</div>
<div class="t" style="left:1.60px;top:218.97px;font-size:13.5px;color:#2a2a2a;transform:scaleX(1.1143);transform-origin:0 0;">[−][Top][2D Wireframe]</div>
<svg class="r" style="left:0.00px;top:730.00px;" width="110.00" height="95.00" viewBox="0 0 110 95"><g stroke="#333" stroke-width="1" fill="none"><path d="M15.6 22.3V81.7H75"/><rect x="10.4" y="76.5" width="11" height="10.4"/><path d="M16.7 4.2L24.2 12L31.7 4.2M24.2 12V18"/><path d="M79.2 66L94.8 81.3M94.8 66L79.2 81.3"/></g></svg>
<svg class="r" style="left:0;top:0" width="1536" height="864" viewBox="0 0 1536 864"><rect x="1465" y="226" width="14.6" height="5.6" fill="#fff" stroke="#555" stroke-width="1.1"/><rect x="1491.6" y="220.4" width="11.4" height="10.6" fill="#fff" stroke="#555" stroke-width="1.1"/><rect x="1489" y="223.4" width="11.4" height="10.6" fill="#fff" stroke="#555" stroke-width="1.1"/><rect x="1492.2" y="226.8" width="5" height="4" fill="#999" stroke="#555" stroke-width="0.8"/><path d="M1513 222L1516 222L1519.5 225L1523 222L1526.4 222L1526.4 224.6L1523 227.2L1526.4 230L1526.4 232.6L1523 232.6L1519.5 229.6L1516 232.6L1513 232.6L1513 230L1516.4 227.2L1513 224.6z" fill="#fff" stroke="#555" stroke-width="1.1"/><circle cx="1464" cy="309.6" r="38" fill="none" stroke="#f8f8f8" stroke-width="7"/><rect x="1441.8" y="287.4" width="45" height="44.4" fill="#f1f1f1" stroke="#a8a8a8" stroke-width="1"/><rect x="1450.6" y="296.6" width="27.4" height="25.6" fill="#e6e6e6"/><text x="1464.2" y="314.2" font-family="Liberation Sans" font-size="11.5" text-anchor="middle" fill="#8a8a8a" textLength="19" lengthAdjust="spacingAndGlyphs">TOP</text><text x="1464" y="266" font-family="Liberation Sans" font-size="16" font-weight="700" text-anchor="middle" fill="#ececec" stroke="#bdbdbd" stroke-width="0.8">N</text><text x="1464" y="364" font-family="Liberation Sans" font-size="16" font-weight="700" text-anchor="middle" fill="#ececec" stroke="#bdbdbd" stroke-width="0.8">S</text><text x="1415" y="315.6" font-family="Liberation Sans" font-size="16" font-weight="700" text-anchor="middle" fill="#ececec" stroke="#bdbdbd" stroke-width="0.8">W</text><text x="1513" y="315.6" font-family="Liberation Sans" font-size="16" font-weight="700" text-anchor="middle" fill="#ececec" stroke="#bdbdbd" stroke-width="0.8">E</text><rect x="1436.8" y="386.4" width="54" height="18.4" rx="2" fill="#ebebf1"/><text x="1455.6" y="400" font-family="Liberation Sans" font-size="12.5" text-anchor="middle" fill="#9a9aa2">WCS</text><path d="M1474.6 392.6H1485L1479.8 398.4z" fill="none" stroke="#d2d2dc" stroke-width="1"/></svg>
<div class="r" style="left:150.00px;top:178.00px;width:796.00px;height:615.60px;background:#fff;border:1px solid #8a8a8a;box-sizing:border-box;"></div>
<div class="r" style="left:151.00px;top:232.00px;width:794.00px;height:560.60px;background:#f0f0f0;"></div>
<div class="t" style="left:165.30px;top:196.55px;font-size:20.5px;color:#1a1a1a;transform:scaleX(0.9463);transform-origin:0 0;-webkit-text-stroke:0.3px;">UCS Transfer</div>
<svg class="r" style="left:906.00px;top:197.00px;" width="18.00" height="17.00" viewBox="0 0 18 17"><path d="M0.5 0.5L17.5 16.5M17.5 0.5L0.5 16.5" stroke="#222" stroke-width="1.3" fill="none"/></svg>
<div class="t" style="left:166.00px;top:252.92px;font-size:19px;color:#111;transform:scaleX(1.0030);transform-origin:0 0;-webkit-text-stroke:0.3px;">UCS transfer name:</div>
<div class="r" style="left:358.00px;top:244.00px;width:577.00px;height:34.50px;background:#fff;border:1px solid #7a7a7a;box-sizing:border-box;"></div>
<div class="t" style="left:361.20px;top:248.86px;font-size:19.3px;color:#111;-webkit-text-stroke:0.3px;">New</div>
<div class="r" style="left:167.00px;top:297.00px;width:376.00px;height:219.00px;border:1px solid #dcdcdc;box-sizing:border-box;"></div>
<div class="r" style="left:175.00px;top:289.00px;width:53.61px;height:16.00px;background:#f0f0f0;"></div>
<div class="t" style="left:177.00px;top:288.12px;font-size:19px;color:#111;-webkit-text-stroke:0.3px;">From:</div>
<div class="r" style="left:558.00px;top:297.00px;width:377.00px;height:219.00px;border:1px solid #dcdcdc;box-sizing:border-box;"></div>
<div class="r" style="left:566.50px;top:289.00px;width:29.35px;height:16.00px;background:#f0f0f0;"></div>
<div class="t" style="left:568.50px;top:288.12px;font-size:19px;color:#111;-webkit-text-stroke:0.3px;">To:</div>
<div class="t" style="left:183.30px;top:338.32px;font-size:19px;color:#111;-webkit-text-stroke:0.3px;">East:</div>
<div class="r" style="left:288.30px;top:329.40px;width:239.00px;height:35.40px;background:#fff;border:1px solid #7a7a7a;box-sizing:border-box;"></div>
<div class="t" style="left:291.50px;top:334.26px;font-size:19.3px;color:#111;-webkit-text-stroke:0.3px;">2097.67235622</div>
<div class="t" style="left:183.30px;top:385.32px;font-size:19px;color:#111;-webkit-text-stroke:0.3px;">North:</div>
<div class="r" style="left:288.30px;top:376.40px;width:239.00px;height:35.40px;background:#fff;border:1px solid #7a7a7a;box-sizing:border-box;"></div>
<div class="t" style="left:291.50px;top:381.26px;font-size:19.3px;color:#111;-webkit-text-stroke:0.3px;">3106.83134091</div>
<div class="t" style="left:183.30px;top:432.42px;font-size:19px;color:#111;-webkit-text-stroke:0.3px;">Elevation:</div>
<div class="r" style="left:288.30px;top:423.50px;width:239.00px;height:35.40px;background:#fff;border:1px solid #7a7a7a;box-sizing:border-box;"></div>
<div class="t" style="left:291.50px;top:428.36px;font-size:19.3px;color:#111;-webkit-text-stroke:0.3px;">0.00000000</div>
<div class="r" style="left:183.50px;top:468.30px;width:343.00px;height:39.00px;background:#e1e1e1;border:1px solid #adadad;box-sizing:border-box;"></div>
<div class="t" style="left:328.62px;top:478.38px;font-size:19.4px;color:#111;transform:scaleX(1.0000);transform-origin:0 0;-webkit-text-stroke:0.3px;">Pick...</div>
<div class="t" style="left:575.30px;top:338.32px;font-size:19px;color:#111;-webkit-text-stroke:0.3px;">East:</div>
<div class="r" style="left:680.30px;top:329.40px;width:239.00px;height:35.40px;background:#fff;border:1px solid #7a7a7a;box-sizing:border-box;"></div>
<div class="t" style="left:683.50px;top:334.26px;font-size:19.3px;color:#111;-webkit-text-stroke:0.3px;">2303.53963122</div>
<div class="t" style="left:575.30px;top:385.32px;font-size:19px;color:#111;-webkit-text-stroke:0.3px;">North:</div>
<div class="r" style="left:680.30px;top:376.40px;width:239.00px;height:35.40px;background:#fff;border:1px solid #7a7a7a;box-sizing:border-box;"></div>
<div class="t" style="left:683.50px;top:381.26px;font-size:19.3px;color:#111;-webkit-text-stroke:0.3px;">3115.90218146</div>
<div class="t" style="left:575.30px;top:432.42px;font-size:19px;color:#111;-webkit-text-stroke:0.3px;">Elevation:</div>
<div class="r" style="left:680.30px;top:423.50px;width:239.00px;height:35.40px;background:#fff;border:1px solid #7a7a7a;box-sizing:border-box;"></div>
<div class="t" style="left:683.50px;top:428.36px;font-size:19.3px;color:#111;-webkit-text-stroke:0.3px;">0.00000000</div>
<div class="r" style="left:575.50px;top:468.30px;width:343.00px;height:39.00px;background:#e1e1e1;border:1px solid #adadad;box-sizing:border-box;"></div>
<div class="t" style="left:720.62px;top:478.38px;font-size:19.4px;color:#111;transform:scaleX(1.0000);transform-origin:0 0;-webkit-text-stroke:0.3px;">Pick...</div>
<div class="t" style="left:166.20px;top:541.82px;font-size:19px;color:#111;transform:scaleX(1.0038);transform-origin:0 0;-webkit-text-stroke:0.3px;">Rotation (decimal degrees, counter-clock):</div>
<div class="r" style="left:783.00px;top:533.00px;width:152.00px;height:36.50px;background:#fff;border:1px solid #7a7a7a;box-sizing:border-box;"></div>
<div class="r" style="left:165.60px;top:575.50px;width:24.00px;height:24.00px;background:#fff;border:1px solid #333;box-sizing:border-box;"></div>
<div class="t" style="left:195.40px;top:578.25px;font-size:19.2px;color:#111;-webkit-text-stroke:0.3px;">Rotate based on From point</div>
<div class="t" style="left:166.20px;top:627.72px;font-size:19px;color:#111;-webkit-text-stroke:0.3px;">Scale:</div>
<div class="r" style="left:783.00px;top:619.00px;width:152.00px;height:35.50px;background:#fff;border:1px solid #7a7a7a;box-sizing:border-box;"></div>
<div class="t" style="left:786.20px;top:623.86px;font-size:19.3px;color:#111;-webkit-text-stroke:0.3px;">2</div>
<div class="r" style="left:797.50px;top:623.00px;width:1.00px;height:26.00px;background:#000;"></div>
<div class="r" style="left:165.60px;top:661.00px;width:24.00px;height:24.00px;background:#fff;border:1px solid #333;box-sizing:border-box;"></div>
<div class="t" style="left:195.40px;top:663.75px;font-size:19.2px;color:#111;-webkit-text-stroke:0.3px;">Scale based on From point</div>
<div class="r" style="left:165.60px;top:699.80px;width:24.00px;height:24.00px;background:#fff;border:1px solid #333;box-sizing:border-box;"></div>
<div class="t" style="left:195.40px;top:702.55px;font-size:19.2px;color:#111;-webkit-text-stroke:0.3px;">Also scale objects in elevation</div>
<div class="r" style="left:393.60px;top:740.70px;width:122.70px;height:39.20px;background:#e1e1e1;border:2px solid #1874c4;box-sizing:border-box;box-shadow:0 0 0 1px #cfe6f8;"></div>
<div class="t" style="left:440.95px;top:749.98px;font-size:19.4px;color:#111;transform:scaleX(1.0000);transform-origin:0 0;-webkit-text-stroke:0.3px;">OK</div>
<div class="r" style="left:569.80px;top:740.80px;width:136.20px;height:39.00px;background:#e1e1e1;border:1px solid #adadad;box-sizing:border-box;"></div>
<div class="t" style="left:607.74px;top:749.98px;font-size:19.4px;color:#111;transform:scaleX(1.0000);transform-origin:0 0;-webkit-text-stroke:0.3px;">Cancel</div>
<div class="r" style="left:1031.00px;top:178.00px;width:332.00px;height:615.60px;background:#fff;border:1px solid #8a8a8a;box-sizing:border-box;"></div>
<div class="r" style="left:1032.00px;top:230.00px;width:330.00px;height:562.60px;background:#f0f0f0;"></div>
<div class="t" style="left:1045.70px;top:195.17px;font-size:20px;color:#1a1a1a;transform:scaleX(1.0189);transform-origin:0 0;-webkit-text-stroke:0.3px;">Months colors legend</div>
<svg class="r" style="left:1325.50px;top:195.00px;" width="17.50" height="17.50" viewBox="0 0 17.5 17.5"><path d="M0.5 0.5L17 17M17 0.5L0.5 17" stroke="#222" stroke-width="1.3" fill="none"/></svg>
<div class="t" style="left:1046.30px;top:235.92px;font-size:19px;color:#111;transform:scaleX(0.9350);transform-origin:0 0;-webkit-text-stroke:0.3px;">Include:</div>
<div class="r" style="left:1045.50px;top:256.00px;width:307.50px;height:320.00px;background:#fff;border:1px solid #2b2b2b;box-sizing:border-box;"></div>
<div class="r" style="left:1046.50px;top:257.00px;width:305.50px;height:272.00px;background:#0078d7;"></div>
<div class="t" style="left:1049.50px;top:259.32px;font-size:19px;color:#fff;transform:scaleX(0.9350);transform-origin:0 0;-webkit-text-stroke:0.3px;">January</div>
<div class="t" style="left:1049.50px;top:281.96px;font-size:19px;color:#fff;transform:scaleX(0.9350);transform-origin:0 0;-webkit-text-stroke:0.3px;">February</div>
<div class="t" style="left:1049.50px;top:304.60px;font-size:19px;color:#fff;transform:scaleX(0.9350);transform-origin:0 0;-webkit-text-stroke:0.3px;">March</div>
<div class="t" style="left:1049.50px;top:327.24px;font-size:19px;color:#fff;transform:scaleX(0.9350);transform-origin:0 0;-webkit-text-stroke:0.3px;">April</div>
<div class="t" style="left:1049.50px;top:349.88px;font-size:19px;color:#fff;transform:scaleX(0.9350);transform-origin:0 0;-webkit-text-stroke:0.3px;">May</div>
<div class="t" style="left:1049.50px;top:372.52px;font-size:19px;color:#fff;transform:scaleX(0.9350);transform-origin:0 0;-webkit-text-stroke:0.3px;">June</div>
<div class="t" style="left:1049.50px;top:395.16px;font-size:19px;color:#fff;transform:scaleX(0.9350);transform-origin:0 0;-webkit-text-stroke:0.3px;">July</div>
<div class="t" style="left:1049.50px;top:417.80px;font-size:19px;color:#fff;transform:scaleX(0.9350);transform-origin:0 0;-webkit-text-stroke:0.3px;">August</div>
<div class="t" style="left:1049.50px;top:440.44px;font-size:19px;color:#fff;transform:scaleX(0.9350);transform-origin:0 0;-webkit-text-stroke:0.3px;">September</div>
<div class="t" style="left:1049.50px;top:463.08px;font-size:19px;color:#fff;transform:scaleX(0.9350);transform-origin:0 0;-webkit-text-stroke:0.3px;">October</div>
<div class="t" style="left:1049.50px;top:485.72px;font-size:19px;color:#fff;transform:scaleX(0.9350);transform-origin:0 0;-webkit-text-stroke:0.3px;">November</div>
<div class="t" style="left:1049.50px;top:508.36px;font-size:19px;color:#fff;transform:scaleX(0.9350);transform-origin:0 0;-webkit-text-stroke:0.3px;">December</div>
<div class="t" style="left:1046.70px;top:601.32px;font-size:19px;color:#111;transform:scaleX(0.9200);transform-origin:0 0;-webkit-text-stroke:0.3px;">Scale:</div>
<div class="r" style="left:1117.00px;top:593.00px;width:72.00px;height:34.00px;background:#fff;border:1px solid #7a7a7a;box-sizing:border-box;"></div>
<div class="t" style="left:1120.70px;top:597.82px;font-size:19px;color:#111;transform:scaleX(0.9000);transform-origin:0 0;-webkit-text-stroke:0.3px;">1.0</div>
<div class="r" style="left:1046.00px;top:633.00px;width:22.60px;height:22.60px;background:#fff;border:1px solid #333;box-sizing:border-box;"></div>
<div class="t" style="left:1073.00px;top:634.92px;font-size:19px;color:#111;transform:scaleX(0.9350);transform-origin:0 0;-webkit-text-stroke:0.3px;">Text in color</div>
<div class="r" style="left:1046.00px;top:669.00px;width:22.60px;height:22.60px;background:#fff;border:1px solid #333;box-sizing:border-box;"></div>
<div class="t" style="left:1073.00px;top:670.92px;font-size:19px;color:#111;transform:scaleX(0.9350);transform-origin:0 0;-webkit-text-stroke:0.3px;">Insert solid</div>
<div class="r" style="left:1046.00px;top:705.20px;width:22.60px;height:22.60px;background:#fff;border:1px solid #cfcfcf;box-sizing:border-box;"></div>
<div class="t" style="left:1073.00px;top:707.12px;font-size:19px;color:#8a8a8a;transform:scaleX(0.9350);transform-origin:0 0;-webkit-text-stroke:0.3px;">Apply hatch</div>
<div class="r" style="left:1053.00px;top:744.00px;width:115.50px;height:36.50px;background:#e1e1e1;border:2px solid #1874c4;box-sizing:border-box;box-shadow:0 0 0 1px #cfe6f8;"></div>
<div class="t" style="left:1097.87px;top:751.93px;font-size:19.4px;color:#111;transform:scaleX(0.9200);transform-origin:0 0;-webkit-text-stroke:0.3px;">OK</div>
<div class="r" style="left:1218.00px;top:744.00px;width:127.70px;height:36.50px;background:#e1e1e1;border:1px solid #adadad;box-sizing:border-box;"></div>
<div class="t" style="left:1254.10px;top:751.93px;font-size:19.4px;color:#111;transform:scaleX(0.9200);transform-origin:0 0;-webkit-text-stroke:0.3px;">Cancel</div>
<div class="r" style="left:307.30px;top:798.30px;width:68.70px;height:30.90px;background:#6a6f79;border-radius:5px 0 0 5px;"></div>
<div class="r" style="left:375.00px;top:798.20px;width:852.50px;height:30.60px;background:#fff;border:1px solid #4a4f57;box-sizing:border-box;border-radius:0 3px 3px 0;border-left:none;"></div>
<svg class="r" style="left:0;top:0" width="1536" height="864" viewBox="0 0 1536 864"><path d="M317.6 803.4V824" stroke="#d9dbde" stroke-width="1.4" stroke-dasharray="1.6 2"/><path d="M327.4 809.6L337 819.4M337 809.6L327.4 819.4" stroke="#f2f3f4" stroke-width="2.2"/><path d="M352.4 821.6L362 811.2" stroke="#f2f3f4" stroke-width="2.8" stroke-linecap="round"/><path d="M366.8 806.2A4.6 4.6 0 1 0 367.8 810.4L364.2 811.4L361.6 808.8L363 805.2z" fill="#f2f3f4"/><rect x="380.6" y="807.4" width="18" height="14" fill="#f4f4f4" stroke="#8a8a8a" stroke-width="1"/><rect x="380.6" y="807.4" width="18" height="3" fill="#8a8a8a"/><path d="M383 813.6L385.6 815.4L383 817.2M386.6 818.4H391" stroke="#7a7a7a" stroke-width="0.8" fill="none"/><path d="M402.4 811.8H410L406.2 816.4z" fill="#7d7d7d"/><path d="M1213.4 816.4L1217.9 812.2L1222.4 816.4z" fill="#8c8c8c"/></svg>
<div class="t" style="left:419.80px;top:807.16px;font-size:14.46px;color:#9a9a9a;font-family:'Liberation Mono',monospace;font-style:italic;">Type a command</div>
<svg class="r" style="left:0;top:0" width="1536" height="864" viewBox="0 0 1536 864"><path d="M10 830 C15 830 14 851 20 851 H74 C80 851 79 830 84 830z" fill="#36414e"/><path d="M84 830 C89 830 88 851 94 851 H150 C156 851 155 830 160 830z" fill="#2c3540"/><path d="M160.5 830 C165.5 830 164.5 851 170.5 851 H230 C236 851 235 830 240 830z" fill="#2c3540"/><path d="M240 830 C245 830 244 851 250 851 H261 C267 851 266 830 271 830z" fill="#2c3540"/></svg>
<div class="t" style="left:26.70px;top:834.75px;font-size:14px;color:#ffffff;transform:scaleX(1.0558);transform-origin:0 0;font-weight:700;">Model</div>
<div class="t" style="left:97.30px;top:834.75px;font-size:14px;color:#b9bfc6;transform:scaleX(0.9735);transform-origin:0 0;">Layout1</div>
<div class="t" style="left:175.60px;top:834.75px;font-size:14px;color:#b9bfc6;transform:scaleX(0.9916);transform-origin:0 0;">Layout2</div>
<div class="t" style="left:253.60px;top:834.70px;font-size:15px;color:#b9bfc6;font-weight:700;">+</div>
<div class="r" style="left:622.50px;top:832.40px;width:215.90px;height:29.60px;background:#323c48;"></div>
<div class="r" style="left:842.20px;top:832.40px;width:58.20px;height:29.60px;background:#323c48;"></div>
<div class="r" style="left:904.50px;top:832.40px;width:77.20px;height:29.60px;background:#323c48;"></div>
<div class="r" style="left:987.30px;top:832.40px;width:123.00px;height:29.60px;background:#323c48;"></div>
<div class="r" style="left:1175.00px;top:832.40px;width:12.50px;height:29.60px;background:#323c48;"></div>
<div class="r" style="left:1191.40px;top:832.40px;width:29.00px;height:29.60px;background:#323c48;"></div>
<div class="r" style="left:1254.40px;top:832.40px;width:97.30px;height:29.60px;background:#323c48;"></div>
<div class="r" style="left:1355.80px;top:832.40px;width:48.20px;height:29.60px;background:#323c48;"></div>
<div class="r" style="left:1406.00px;top:832.40px;width:29.00px;height:29.60px;background:#323c48;"></div>
<div class="r" style="left:1439.00px;top:832.40px;width:30.40px;height:29.60px;background:#323c48;"></div>
<div class="r" style="left:1477.00px;top:832.40px;width:30.00px;height:29.60px;background:#323c48;"></div>
<div class="r" style="left:1509.00px;top:832.40px;width:27.00px;height:29.60px;background:#323c48;"></div>
<div class="r" style="left:1113.60px;top:833.00px;width:27.80px;height:28.20px;background:#5a8fc8;"></div>
<div class="r" style="left:1142.80px;top:833.00px;width:27.40px;height:28.20px;background:#5a8fc8;"></div>
<div class="r" style="left:1225.80px;top:833.00px;width:27.40px;height:28.20px;background:#5a8fc8;"></div>
<div class="r" style="left:1472.20px;top:834.00px;width:1.40px;height:27.00px;background:#3a4450;"></div>
<div class="t" style="left:642.80px;top:841.15px;font-size:14px;color:#ffffff;transform:scaleX(0.9935);transform-origin:0 0;font-weight:700;opacity:.95;">2828.3233, 1490.2553, 0.0000</div>
<div class="t" style="left:847.60px;top:841.15px;font-size:14px;color:#f2f3f5;transform:scaleX(0.9555);transform-origin:0 0;font-weight:700;opacity:.95;">MODEL</div>
<div class="t" style="left:1318.30px;top:841.97px;font-size:13.5px;color:#f2f3f5;transform:scaleX(0.7226);transform-origin:0 0;font-weight:700;">1:1</div>
<svg class="r" style="left:0;top:0" width="1536" height="864" viewBox="0 0 1536 864"><path d="M910 843H928.4M910 849.6H928.4M915.4 837.4V855.6M922.4 837.4V855.6" stroke="#e9ebee" stroke-width="1.2"/><path d="M910 846.3H928.4M918.9 837.4V855.6" stroke="#e9ebee" stroke-width="0.7"/><rect x="940.4" y="839.6" width="2.2" height="2.2" fill="#e9ebee"/><rect x="940.4" y="845.8" width="2.2" height="2.2" fill="#e9ebee"/><rect x="940.4" y="852.0" width="2.2" height="2.2" fill="#e9ebee"/><rect x="946.8" y="839.6" width="2.2" height="2.2" fill="#e9ebee"/><rect x="946.8" y="845.8" width="2.2" height="2.2" fill="#e9ebee"/><rect x="946.8" y="852.0" width="2.2" height="2.2" fill="#e9ebee"/><rect x="953.2" y="839.6" width="2.2" height="2.2" fill="#e9ebee"/><rect x="953.2" y="845.8" width="2.2" height="2.2" fill="#e9ebee"/><rect x="953.2" y="852.0" width="2.2" height="2.2" fill="#e9ebee"/><path d="M967.6 844.8H976.6L972.1 849.5999999999999z" fill="#e9ebee"/><path d="M991.6 837.6V856.4H1011" stroke="#e9ebee" stroke-width="1.3" fill="none"/><path d="M991.6 850.6H997.4V856.4" stroke="#e9ebee" stroke-width="1" fill="none"/><circle cx="1029" cy="848" r="8.4" fill="none" stroke="#e9ebee" stroke-width="1.2"/><path d="M1029 848H1040.4M1029 848L1036.6 838" stroke="#e9ebee" stroke-width="1.1"/><path d="M1049.4 844.8H1058.4L1053.9 849.5999999999999z" fill="#e9ebee"/><path d="M1078 838V857M1071.6 839.6L1085.4 853.4" stroke="#aab1b9" stroke-width="1.2"/><rect x="1076.4" y="845.2" width="3.2" height="3.2" fill="none" stroke="#e9ebee" stroke-width="0.9"/><path d="M1097.4 844.8H1106.4L1101.9 849.5999999999999z" fill="#e9ebee"/><path d="M1118.6 854.4L1131.6 840.6M1118.6 854.4H1136.4" stroke="#fff" stroke-width="1.4" fill="none"/><circle cx="1124.8" cy="847.8" r="1.6" fill="#fff"/><rect x="1149.6" y="841.4" width="16.4" height="15.2" fill="none" stroke="#fff" stroke-width="1.3"/><rect x="1146.8" y="838.4" width="4.8" height="4.8" fill="#5a8fc8" stroke="#fff" stroke-width="1"/><path d="M1175.6 844.8H1184.6L1180.1 849.5999999999999z" fill="#e9ebee"/><path d="M1196 841.4H1216" stroke="#e9ebee" stroke-width="1.4"/><path d="M1196 847H1216" stroke="#e9ebee" stroke-width="2.2"/><path d="M1196 853H1216" stroke="#e9ebee" stroke-width="3.2"/><rect x="1206" y="839" width="10.4" height="16.4" fill="#323c48" opacity="0.55"/><path d="M1236.8 838L1240.2 849.6L1245.3999999999999 856.6L1239.0 852.0L1236.8 855.0L1234.6 852.0L1228.2 856.6L1233.3999999999999 849.6z" fill="#fff"/><circle cx="1245.6" cy="841.6" r="2.6" fill="none" stroke="#fff" stroke-width="1"/><path d="M1267.4 839L1270.8000000000002 849.6L1276.0 856.6L1269.6000000000001 852.0L1267.4 855.0L1265.2 852.0L1258.8000000000002 856.6L1264.0 849.6z" fill="#e9ebee"/><path d="M1275.6 838L1272.6 842.6H1275L1273 846.4" stroke="#e9ebee" stroke-width="1.2" fill="none"/><path d="M1296.4 839L1299.8000000000002 849.6L1305.0 856.6L1298.6000000000001 852.0L1296.4 855.0L1294.2 852.0L1287.8000000000002 856.6L1293.0 849.6z" fill="#e9ebee"/><path d="M1337.4 844.8H1346.4L1341.9 849.5999999999999z" fill="#e9ebee"/><path d="M1377.26 845.60L1380.05 845.72L1380.05 849.08L1377.26 849.20L1376.58 850.84L1378.47 852.90L1376.10 855.27L1374.04 853.38L1372.40 854.06L1372.28 856.85L1368.92 856.85L1368.80 854.06L1367.16 853.38L1365.10 855.27L1362.73 852.90L1364.62 850.84L1363.94 849.20L1361.15 849.08L1361.15 845.72L1363.94 845.60L1364.62 843.96L1362.73 841.90L1365.10 839.53L1367.16 841.42L1368.80 840.74L1368.92 837.95L1372.28 837.95L1372.40 840.74L1374.04 841.42L1376.10 839.53L1378.47 841.90L1376.58 843.96z" fill="#e9ebee"/><circle cx="1370.6" cy="847.4" r="3" fill="#323c48"/><path d="M1390.4 844.8H1399.4L1394.9 849.5999999999999z" fill="#e9ebee"/><path d="M1410.4 847.6H1429.4M1419.9 838V857.2" stroke="#e9ebee" stroke-width="2.3"/><rect x="1444.4" y="838.4" width="6.6" height="6.6" fill="none" stroke="#e9ebee" stroke-width="1.1"/><circle cx="1459.4" cy="846.4" r="4" fill="none" stroke="#e9ebee" stroke-width="1.1"/><path d="M1451.6 849.4L1455.6 856.6H1447.6z" fill="none" stroke="#e9ebee" stroke-width="1.1"/><rect x="1482.6" y="840.6" width="19" height="13.2" fill="none" stroke="#e9ebee" stroke-width="1.2"/><path d="M1496.4 843.4H1499V846M1499 843.4L1495.4 847M1488 851H1485.4V848.4M1485.4 851L1489 847.4" stroke="#e9ebee" stroke-width="1.1" fill="none"/><path d="M1511.4 840.4H1530.6M1511.4 847.4H1530.6M1511.4 854.4H1530.6" stroke="#fff" stroke-width="2.6"/></svg>
</div></body></html>
